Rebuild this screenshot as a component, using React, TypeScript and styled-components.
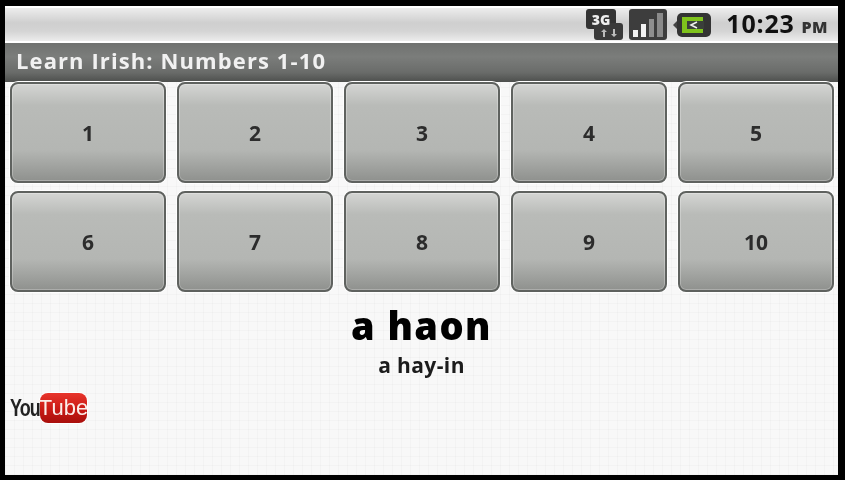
import React from 'react';
import styled, { createGlobalStyle } from 'styled-components';

const GlobalStyle = createGlobalStyle`
    html, body {
        margin: 0;
        padding: 0;
        background: #000;
    }
`;

const Frame = styled.div`
    width: 845px;
    height: 480px;
    box-sizing: border-box;
    padding: 6px 7px 5px 5px;
    background: #000;
    overflow: hidden;
`;

const Screen = styled.div`
    height: 100%;
    display: flex;
    flex-direction: column;
    font-family: "Open Sans", "Noto Sans", sans-serif;
    background-color: #f8f8f8;
    background-image:
        linear-gradient(rgba(0, 0, 0, 0.018) 1px, transparent 1px),
        linear-gradient(90deg, rgba(0, 0, 0, 0.018) 1px, transparent 1px);
    background-size: 9px 9px;
    filter: blur(0.7px);
`;

const StatusBar = styled.div`
    flex: 0 0 37px;
    min-height: 0;
    box-sizing: border-box;
    display: flex;
    align-items: center;
    justify-content: flex-end;
    padding: 0 10px 0 0;
    border-top: 2px solid #fff;
    border-bottom: 2px solid #fff;
    background: linear-gradient(#ededed 0%, #cfcfcf 45%, #d4d4d4 70%, #ececec 100%);
`;

const StatusIcon = styled.svg`
    display: block;
    flex-shrink: 0;
    margin-right: 6px;
`;

const Clock = styled.div`
    display: flex;
    align-items: baseline;
    margin-left: 15px;
    font-size: 25px;
    line-height: 30px;
    font-weight: 700;
    letter-spacing: 0.8px;
    color: #111;
    white-space: nowrap;
`;

const Meridiem = styled.span`
    margin-left: 7px;
    font-size: 16px;
    font-weight: 800;
    letter-spacing: 0.4px;
    color: #333;
`;

const TitleBar = styled.div`
    flex: 0 0 39px;
    box-sizing: border-box;
    display: flex;
    align-items: center;
    padding: 0 0 6px 11px;
    font-size: 22px;
    font-weight: 700;
    letter-spacing: 1.1px;
    color: #f1f1f1;
    background: linear-gradient(#6f716f 0%, #7b7d7b 35%, #6a6c6a 75%, #4d4f4d 100%);
`;

const Pad = styled.div`
    display: grid;
    grid-template-columns: repeat(5, 156px);
    grid-auto-rows: 101px;
    column-gap: 11px;
    row-gap: 8px;
    padding: 0 0 0 5px;
`;

const PadButton = styled.div`
    box-sizing: border-box;
    display: flex;
    align-items: center;
    justify-content: center;
    border: 2px solid #5f625f;
    border-radius: 8px;
    box-shadow: 0 0 0 1px #fff, inset 0 0 0 1px rgba(255, 255, 255, 0.25);
    font-size: 21px;
    font-weight: 700;
    color: #2c2c2c;
    background: linear-gradient(#d4d5d3 0%, #b9bbb8 22%, #b4b6b3 68%, #8f918e 100%);
`;

const Word = styled.div`
    margin-top: 7px;
    text-align: center;
    font-size: 38px;
    line-height: 52px;
    font-weight: 800;
    letter-spacing: 1.4px;
    color: #000;
`;

const Pronunciation = styled.div`
    text-align: center;
    font-size: 21px;
    line-height: 28px;
    font-weight: 700;
    letter-spacing: 0.4px;
    color: #1c1c1c;
`;

const YouTubeRow = styled.div`
    display: flex;
    align-items: center;
    margin: 14px 0 0 5px;
`;

const You = styled.span`
    width: 30px;
    font-family: "Liberation Sans", Arial, sans-serif;
    font-size: 23px;
    font-weight: 700;
    letter-spacing: -1.2px;
    color: #222;
    white-space: nowrap;
    transform: scaleX(0.78);
    transform-origin: left center;
`;

const Tube = styled.span`
    display: flex;
    align-items: center;
    justify-content: center;
    width: 47px;
    height: 30px;
    border-radius: 8px;
    box-shadow: 0 0 0 1px #fff;
    font-family: "Liberation Sans", Arial, sans-serif;
    font-size: 22px;
    font-weight: 400;
    letter-spacing: 0;
    color: #fbeeea;
    background: linear-gradient(#e8352c 0%, #c91a14 55%, #a80f0c 100%);
`;

const Network = () => (
    <StatusIcon width="37" height="31" viewBox="0 0 37 31">
        <rect x="0" y="0" width="30" height="20" rx="3" fill="#333" />
        <rect x="8" y="14" width="29" height="17" rx="3" fill="#3a3a3a" />
        <text x="15" y="16" textAnchor="middle" fontFamily="Open Sans, sans-serif" fontSize="14" fontWeight="800" fill="#eee">3G</text>
        <path d="M15 23l3-3 3 3h-2v5h-2v-5zM31 25l-3 3-3-3h2v-5h2v5z" fill="#bbb" />
    </StatusIcon>
);

const Signal = () => (
    <StatusIcon width="38" height="31" viewBox="0 0 38 31">
        <rect x="0" y="0" width="38" height="31" rx="3" fill="#3d3d3d" />
        <rect x="4" y="21" width="5" height="7" fill="#f2f2f2" />
        <rect x="12" y="15" width="5" height="13" fill="#f2f2f2" />
        <rect x="20" y="10" width="5" height="18" fill="#8f8f8f" />
        <rect x="28" y="4" width="6" height="24" fill="#8a8a8a" />
    </StatusIcon>
);

const Battery = () => (
    <StatusIcon width="38" height="24" viewBox="0 0 38 24" style={{ marginRight: 0 }}>
        <path d="M0 12l4-4v8z" fill="#444" />
        <rect x="4" y="0" width="34" height="24" rx="5" fill="#333" />
        <rect x="9" y="4" width="21" height="16" fill="#7fc31c" />
        <rect x="14" y="8" width="17" height="8" fill="#3a3f3a" />
        <path d="M24 9l-6 3 6 3" fill="none" stroke="#eee" strokeWidth="1.6" />
    </StatusIcon>
);

const numbers = ['1', '2', '3', '4', '5', '6', '7', '8', '9', '10'];

export default function App() {
    return (
        <Frame>
            <GlobalStyle />
            <Screen>
                <StatusBar>
                    <Network />
                    <Signal />
                    <Battery />
                    <Clock>
                        10:23<Meridiem>PM</Meridiem>
                    </Clock>
                </StatusBar>
                <TitleBar>Learn Irish: Numbers 1-10</TitleBar>
                <Pad>
                    {numbers.map(n => (
                        <PadButton key={n}>{n}</PadButton>
                    ))}
                </Pad>
                <Word>a haon</Word>
                <Pronunciation>a hay-in</Pronunciation>
                <YouTubeRow>
                    <You>You</You>
                    <Tube>Tube</Tube>
                </YouTubeRow>
            </Screen>
        </Frame>
    );
}
